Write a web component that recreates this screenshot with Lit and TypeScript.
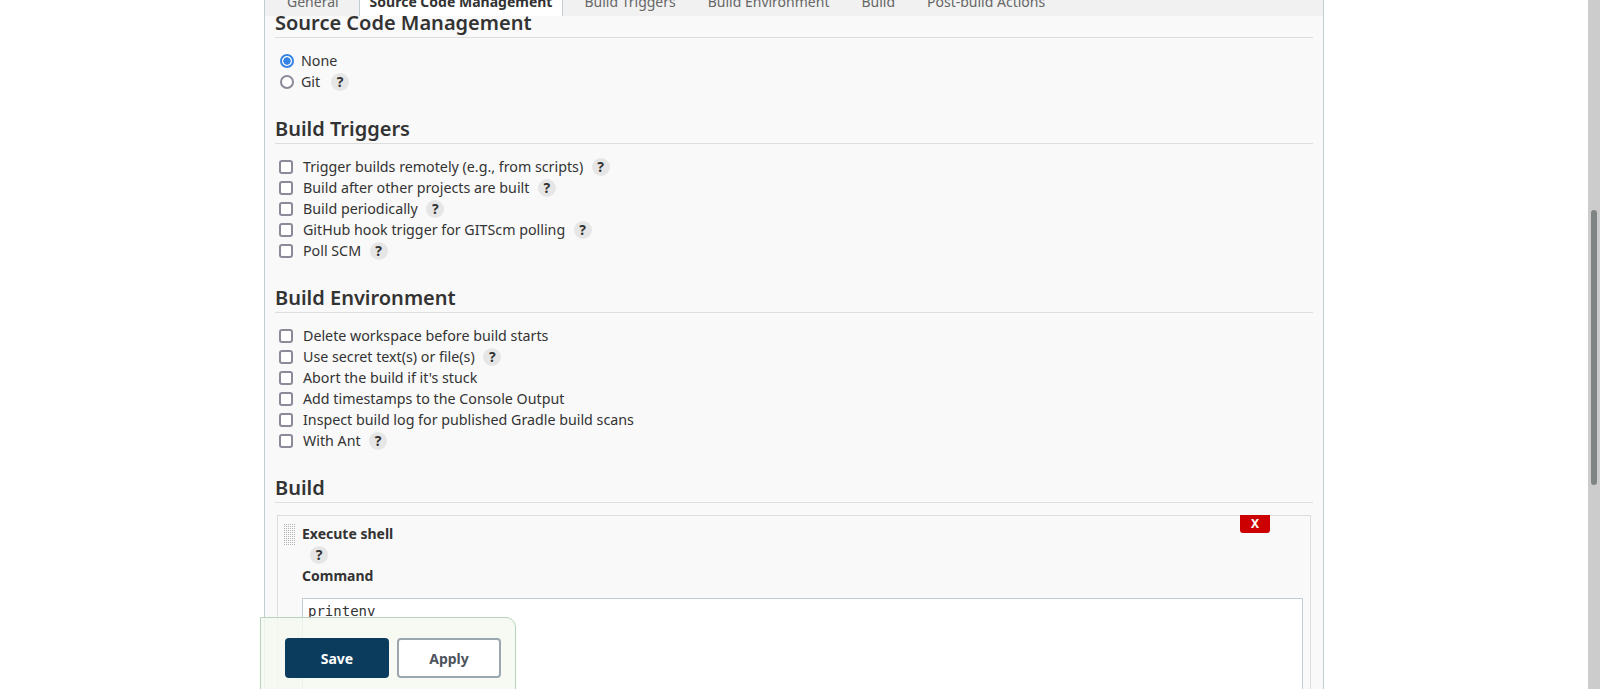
import { LitElement, html, css } from "lit";
import { customElement } from "lit/decorators.js";

const help = html`<span class="help">?</span>`;

type Row = [string, boolean];
const triggers: Row[] = [
  ["Trigger builds remotely (e.g., from scripts)", true],
  ["Build after other projects are built", true],
  ["Build periodically", true],
  ["GitHub hook trigger for GITScm polling", true],
  ["Poll SCM", true],
];
const env: Row[] = [
  ["Delete workspace before build starts", false],
  ["Use secret text(s) or file(s)", true],
  ["Abort the build if it's stuck", false],
  ["Add timestamps to the Console Output", false],
  ["Inspect build log for published Gradle build scans", false],
  ["With Ant", true],
];
const tabs = ["General", "Source Code Management", "Build Triggers", "Build Environment", "Build", "Post-build Actions"];

@customElement("app-root")
export class AppRoot extends LitElement {
  static styles = css`
    :host {
      display: block;
      position: relative;
      height: 689px;
      overflow: hidden;
      background: #fff;
      font-family: "Noto Sans", sans-serif;
      font-size: 14.25px;
      color: #333;
    }
    .panel {
      box-sizing: border-box;
      width: 1060px;
      height: 689px;
      margin-left: 264px;
      border-left: 1px solid #c3ccd1;
      border-right: 1px solid #c3ccd1;
      background: #f9f9f9;
      overflow: hidden;
    }
    .tabs {
      display: flex;
      height: 16px;
      background: #f1f1f1;
      overflow: hidden;
    }
    .tab {
      margin-top: -8px;
      padding: 0 16px;
      height: 24px;
      line-height: 19px;
      font-size: 14px;
      color: #666;
      white-space: nowrap;
    }
    .tab:first-child { padding-left: 22px; padding-right: 20px; }
    .tab.active {
      background: #fff;
      color: #333;
      font-weight: 700;
      border-left: 1px solid #c3ccd1;
      border-right: 1px solid #c3ccd1;
      padding: 0 10px;
      margin-right: 5px;
    }
    .body { padding: 0 10px; }
    h2 {
      margin: 0;
      font-size: 20px;
      font-weight: 600;
      line-height: 27px;
      height: 28px;
      border-bottom: 1px solid #ddd;
      color: #333;
    }
    h2.first { margin-top: -7px; height: 28px; line-height: 28px; }
    .list { padding: 12px 0 0 5px; }
    .row {
      display: flex;
      align-items: center;
      height: 21px;
      white-space: nowrap;
    }
    .radio {
      box-sizing: border-box;
      width: 14px;
      height: 14px;
      border-radius: 50%;
      border: 2px solid #8a8a98;
      background: #fff;
      margin-right: 7px;
      flex: none;
    }
    .radio.on {
      border-color: #3584e4;
      background: radial-gradient(circle, #3584e4 0 3.4px, #fff 4px);
    }
    .radio-row .help { margin-left: 11px; }
    .check {
      box-sizing: border-box;
      width: 14px;
      height: 14px;
      border-radius: 3px;
      border: 2px solid #8a8a98;
      background: #fff;
      margin: 0 10px 0 -1px;
      flex: none;
    }
    .help {
      display: inline-flex;
      align-items: center;
      justify-content: center;
      width: 18px;
      height: 18px;
      margin-left: 8.5px;
      border-radius: 50%;
      background: #e6e6e6;
      font-size: 14px;
      font-weight: 700;
      color: #333;
      flex: none;
    }
    .sec { margin-top: 23px; }
    .builder {
      position: relative;
      box-sizing: border-box;
      margin: 12px 2px 0 2px;
      height: 300px;
      border: 1px solid #ddd;
    }
    .grip {
      position: absolute;
      left: 5px;
      top: 8px;
      width: 12px;
      height: 21px;
      background-image: conic-gradient(#b4b4b4 25%, transparent 0);
      background-size: 2px 2px;
    }
    .del {
      position: absolute;
      right: 40px;
      top: -1px;
      width: 30px;
      height: 18px;
      box-sizing: border-box;
      background: #c00;
      border-radius: 0 0 3px 3px;
      color: #fff;
      font-size: 12px;
      font-weight: 700;
      text-align: center;
      line-height: 17px;
    }
    .inner { padding: 8px 7px 0 24px; font-size: 14px; }
    .title { font-weight: 700; height: 20px; line-height: 20px; }
    .hrow { height: 21px; display: flex; align-items: center; }
    .hrow .help { margin-left: 8px; }
    .label { font-weight: 700; height: 21px; line-height: 21px; }
    textarea {
      display: block;
      box-sizing: border-box;
      width: 100%;
      height: 240px;
      margin: 12px 0 0;
      padding: 3px 5px;
      border: 1px solid #c3ccd1;
      border-radius: 0;
      background: #fff;
      color: #333;
      font-family: "DejaVu Sans Mono", monospace;
      font-size: 14px;
      line-height: 19px;
      resize: none;
      outline: none;
    }
    .bar {
      position: absolute;
      left: 260px;
      top: 617px;
      box-sizing: border-box;
      width: 256px;
      height: 90px;
      display: flex;
      gap: 8px;
      padding: 20px 0 0 24px;
      border: 1px solid #b5d4ba;
      border-radius: 0 10px 0 0;
      background: rgba(244, 249, 241, 0.85);
    }
    .btn {
      box-sizing: border-box;
      width: 104px;
      height: 40px;
      border-radius: 4px;
      display: flex;
      align-items: center;
      justify-content: center;
      font-weight: 700;
      font-size: 14px;
    }
    .save { background: #0b3c5d; color: #fff; }
    .apply { background: #fff; color: #4d545d; border: 2px solid #9aa7ae; }
    .track {
      position: absolute;
      right: 0;
      top: 0;
      width: 12px;
      height: 689px;
      background: #ccc;
    }
    .thumb {
      position: absolute;
      left: 3px;
      top: 210px;
      width: 6px;
      height: 275px;
      border-radius: 3px;
      background: #7f8584;
    }
  `;

  private checks(rows: Row[]) {
    return html`<div class="list">
      ${rows.map(
        ([t, h]) => html`<div class="row"><span class="check"></span><span>${t}</span>${h ? help : ""}</div>`
      )}
    </div>`;
  }

  render() {
    return html`
      <div class="panel">
        <div class="tabs">
          ${tabs.map((t, i) => html`<div class="tab ${i === 1 ? "active" : ""}">${t}</div>`)}
        </div>
        <div class="body">
          <h2 class="first">Source Code Management</h2>
          <div class="list">
            <div class="row radio-row"><span class="radio on"></span><span>None</span></div>
            <div class="row radio-row"><span class="radio"></span><span>Git</span>${help}</div>
          </div>
          <h2 class="sec">Build Triggers</h2>
          ${this.checks(triggers)}
          <h2 class="sec">Build Environment</h2>
          ${this.checks(env)}
          <h2 class="sec">Build</h2>
          <div class="builder">
            <div class="grip"></div>
            <div class="del">X</div>
            <div class="inner">
              <div class="title">Execute shell</div>
              <div class="hrow">${help}</div>
              <div class="label">Command</div>
              <textarea readonly>printenv</textarea>
            </div>
          </div>
        </div>
      </div>
      <div class="bar">
        <div class="btn save">Save</div>
        <div class="btn apply">Apply</div>
      </div>
      <div class="track"><div class="thumb"></div></div>
    `;
  }
}
